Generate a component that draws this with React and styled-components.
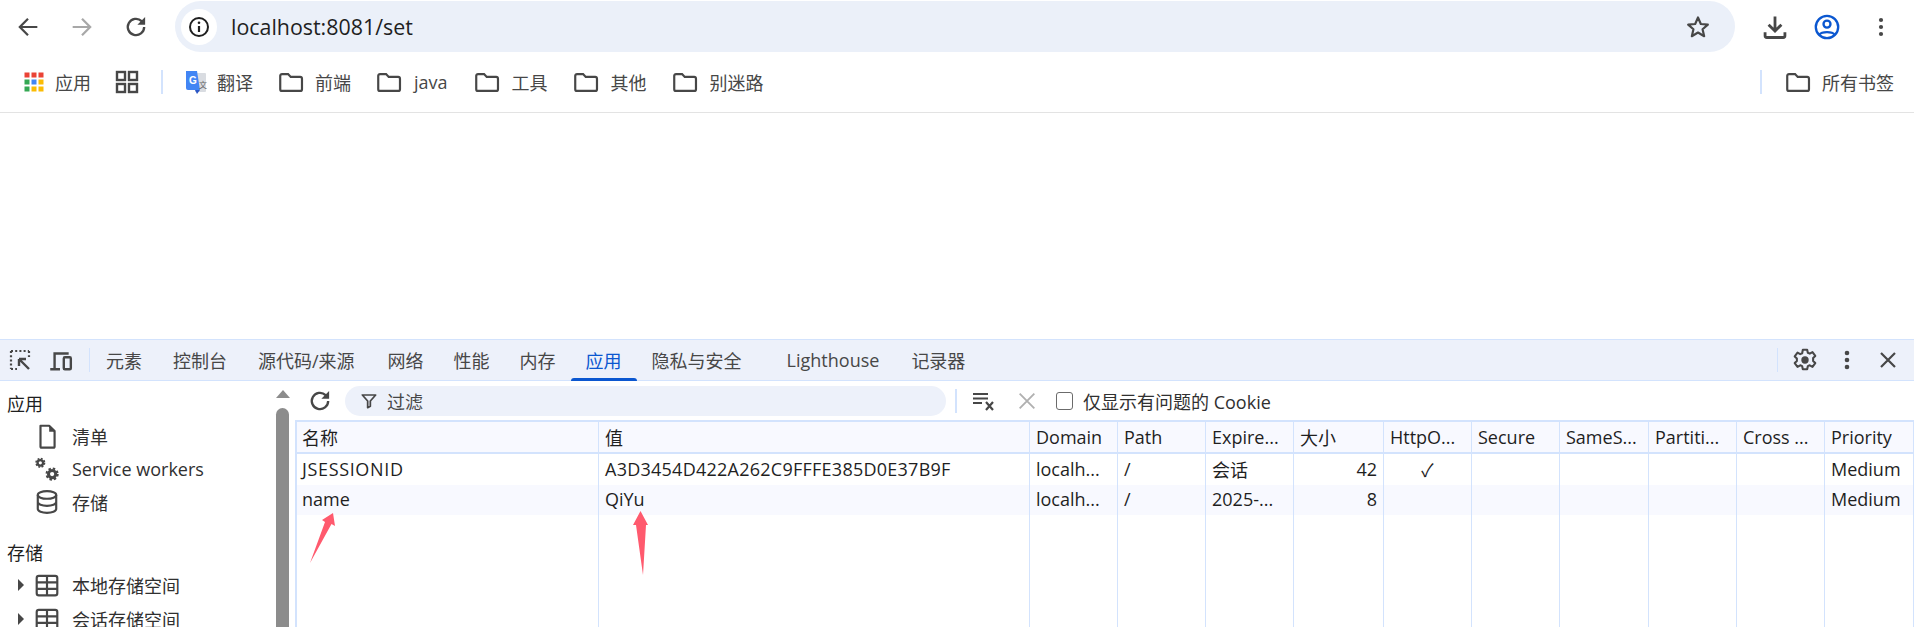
import React from "react";
import styled, { createGlobalStyle } from "styled-components";

const FONT = `"Open Sans", "Noto Sans CJK SC", sans-serif`;

const Global = createGlobalStyle`
  html, body { margin: 0; padding: 0; background: #fff; overflow: hidden; }
  body { font-family: ${FONT}; color: #303030; }
  * { box-sizing: border-box; }
`;

const Page = styled.div`
  width: 1914px; height: 627px; display: flex; flex-direction: column; overflow: hidden;
`;
const NavBar = styled.div`
  height: 54px; display: flex; align-items: center; padding-bottom: 1px;
`;
const NavButton = styled.div`
  width: ${p => p.$w || 54}px; height: 54px; display: flex; align-items: center; justify-content: center; flex: none;
`;
const Omnibox = styled.div`
  width: 1560px; height: 51px; border-radius: 26px; background: #ebf0f9;
  display: flex; align-items: center; padding: 0 24px 0 6px; flex: none;
`;
const InfoChip = styled.div`
  width: 36px; height: 36px; border-radius: 50%; background: #fff; display: flex; align-items: center; justify-content: center; flex: none;
`;
const Url = styled.div`
  margin-left: 14px; font-size: 21.4px; color: #1f1f1f; flex: 1;
`;
const BookmarkBar = styled.div`
  height: 59px; display: flex; align-items: center; border-bottom: 1px solid #e3e3e3; padding: 0 20px 2px 24px;
`;
const Bookmark = styled.div`
  display: flex; align-items: center; gap: ${p => p.$gap || 10}px; font-size: 18px; color: #474747; flex: none; margin-left: ${p => p.$ml || 0}px;
`;
const BarDivider = styled.div`
  width: 2px; height: 24px; background: #d3e3fd; flex: none; margin-left: ${p => p.$ml || 0}px;
`;
const Spacer = styled.div` flex: 1; `;
const Blank = styled.div` height: 226px; flex: none; `;

const DevTools = styled.div`
  flex: 1; display: flex; flex-direction: column; min-height: 0;
`;
const TabBar = styled.div`
  height: 42px; flex: none; background: #edf1fa; border-top: 1px solid #d3e3fd; border-bottom: 1px solid #d3e3fd;
  display: flex; align-items: stretch;
`;
const TabTool = styled.div`
  width: ${p => p.$w}px; display: flex; align-items: center; justify-content: center; flex: none;
`;
const ToolDivider = styled.div`
  width: 1px; height: 24px; background: #d3e3fd; align-self: center; flex: none; margin: ${p => p.$m || "0"};
`;
const Tab = styled.div`
  position: relative; display: flex; align-items: center; padding: 0 15px; font-size: 18px; flex: none;
  margin-left: ${p => p.$ml || 0}px;
  color: ${p => (p.$active ? "#0b57d0" : "#474747")};
  ${p => p.$active && `
    &::after { content: ""; position: absolute; left: 0; right: 0; bottom: -1px; height: 3px; background: #0b57d0; border-radius: 3px 3px 0 0; }
  `}
`;
const Body = styled.div` flex: 1; display: flex; min-height: 0; `;
const Sidebar = styled.div`
  width: 295px; flex: none; position: relative; overflow: hidden; padding-top: 5px;
`;
const SectionHead = styled.div`
  height: 33px; padding-left: 7px; display: flex; align-items: center; font-size: 18px; color: #1f1f1f;
  margin-top: ${p => p.$mt || 0}px;
`;
const TreeRow = styled.div`
  height: ${p => p.$h || 33}px; display: flex; align-items: center; font-size: 18px; color: #303030; padding-left: 18px;
`;
const Caret = styled.div`
  width: 0; height: 0; border-left: 6px solid ${p => (p.$hide ? "transparent" : "#474747")};
  border-top: 6px solid transparent; border-bottom: 6px solid transparent; flex: none; margin-right: 9px;
`;
const TreeIcon = styled.div`
  width: 27px; display: flex; justify-content: center; flex: none; margin-right: 12px;
`;
const ScrollUp = styled.div`
  position: absolute; right: 5px; top: 9px; width: 0; height: 0;
  border-left: 7.5px solid transparent; border-right: 7.5px solid transparent; border-bottom: 8px solid #8c8c8c;
`;
const ScrollThumb = styled.div`
  position: absolute; right: 6px; top: 27px; bottom: -20px; width: 13px; background: #8c8c8c; border-radius: 7px 7px 0 0;
`;
const Main = styled.div` flex: 1; display: flex; flex-direction: column; min-width: 0; position: relative; `;
const FilterBar = styled.div`
  height: 39px; flex: none; display: flex; align-items: center;
`;
const RefreshBox = styled.div`
  width: 50px; display: flex; justify-content: center; flex: none;
`;
const FilterInput = styled.div`
  width: 601px; height: 30px; border-radius: 15px; background: #edf1fa; display: flex; align-items: center; padding-left: 16px; gap: 10px;
  font-size: 18px; color: #474747; flex: none;
`;
const FilterDivider = styled.div`
  width: 2px; height: 24px; background: #d3e3fd; margin-left: 9px; flex: none;
`;
const FilterTool = styled.div`
  width: ${p => p.$w}px; display: flex; justify-content: center; flex: none;
`;
const CheckBox = styled.div`
  width: 17px; height: 18px; border: 1.5px solid #6b6b6b; border-radius: 3px; flex: none; margin-right: 10px; margin-left: 13px;
`;
const CheckLabel = styled.div` font-size: 18px; color: #303030; white-space: nowrap; `;
const Table = styled.div`
  flex: 1; display: grid; min-height: 0; border-top: 2px solid #d3e3fd; border-left: 2px solid #d3e3fd;
  grid-template-columns: 302px 431px 88px 88px 88px 90px 88px 88px 89px 88px 88px 1fr;
  grid-template-rows: 32px 31px 30px 1fr;
`;
const Cell = styled.div`
  border-right: 1px solid #d3e3fd;
  padding: 0 6px 2px; display: flex; align-items: center; font-size: 18px; color: #1f1f1f; white-space: nowrap; overflow: hidden;
  justify-content: ${p => p.$align || "flex-start"};
  background: ${p => (p.$bg ? "#f8f9ff" : "#fff")};
`;
const NameCell = styled(Cell)`
  padding-left: 5px;
`;
const HeadCell = styled(Cell)`
  background: #f8f9ff; border-bottom: 2px solid #d3e3fd; padding-bottom: 0;
`;
const NameHead = styled(HeadCell)`
  padding-left: 5px;
`;
const HashText = styled.span` letter-spacing: 0.25px; `;
const SessionName = styled.span` letter-spacing: 0.65px; `;
const Arrows = styled.svg`
  position: absolute; left: 0; top: 0; pointer-events: none;
`;

const Ico = ({ s = 24, children, vb = "0 0 24 24", ...r }) => (
  <svg width={s} height={s} viewBox={vb} fill="none" {...r}>{children}</svg>
);

const Folder = () => (
  <Ico s={29}><path d="M3.500 6.500a1.500 1.500 0 0 1 1.500-1.500h5l2.200 2.400h7.800a1.500 1.500 0 0 1 1.500 1.500v8.600a1.500 1.500 0 0 1-1.500 1.500H5a1.500 1.500 0 0 1-1.500-1.500z" stroke="#474747" strokeWidth="1.800" /></Ico>
);
const Arrow = ({ dir, color }) => (
  <Ico s={28}>
    <path d={dir < 0 ? "M20 12H5M12 5l-7 7 7 7" : "M4 12h15M12 5l7 7-7 7"} stroke={color} strokeWidth="1.900" />
  </Ico>
);
const Dots = ({ c = "#474747", r = 2.4 }) => (
  <Ico s={24}><circle cx="12" cy="5" r={r} fill={c} /><circle cx="12" cy="12" r={r} fill={c} /><circle cx="12" cy="19" r={r} fill={c} /></Ico>
);
const Reload = ({ s = 24, c = "#474747", w = 2.2 }) => (
  <Ico s={s}><path d="M19 12a7 7 0 1 1-2.200-5.100L19 9" stroke={c} strokeWidth={w} /><path d="M19.800 3.500v6.600h-6.600z" fill={c} /></Ico>
);
const AppsGrid = () => {
  const order = ["#ea4335", "#ea4335", "#ea4335", "#34a853", "#4285f4", "#fbbc04", "#34a853", "#fbbc04", "#fbbc04"];
  return (
    <Ico s={20} vb="0 0 20 20">
      {order.map((c, i) => <rect key={i} x={(i % 3) * 7 + 0.5} y={Math.floor(i / 3) * 7 + 0.5} width="5" height="5" fill={c} />)}
    </Ico>
  );
};
const OutlineGrid = () => (
  <Ico s={24}>
    {[[2, 2], [14, 2], [2, 14], [14, 14]].map(([x, y]) => <rect key={x + "-" + y} x={x} y={y} width="8" height="8" stroke="#474747" strokeWidth="2.400" />)}
  </Ico>
);
const Translate = () => (
  <Ico s={24}>
    <path d="M11 3h10a1 1 0 0 1 1 1v17a1 1 0 0 1-1 1H11z" fill="#d9dce1" />
    <path d="M2 1h11l3 19H4a2 2 0 0 1-2-2z" fill="#4285f4" />
    <path d="M11 20h5l-3 4z" fill="#2a56c6" />
    <text x="5" y="14" fontSize="10" fontWeight="700" fill="#fff" fontFamily="Liberation Sans">G</text>
    <text x="15" y="18" fontSize="8" fill="#666" fontFamily="Noto Sans CJK SC">文</text>
  </Ico>
);
const Table3 = () => (
  <Ico s={26}><rect x="2.500" y="3.500" width="19" height="18" rx="2" stroke="#474747" strokeWidth="2" /><path d="M2.500 9.500h19M2.500 15.500h19M12 3.500v18" stroke="#474747" strokeWidth="2" /></Ico>
);
const Gear = ({ cx, cy, r }) => (
  <g>
    <circle cx={cx} cy={cy} r={r * 0.75} stroke="#474747" strokeWidth={r * 0.62} />
    <circle cx={cx} cy={cy} r={r * 1.15} stroke="#474747" strokeWidth={r * 0.42} strokeDasharray={`${r * 0.5} ${(2 * Math.PI * r * 1.15) / 8 - r * 0.5}`} />
  </g>
);

const tabs = [["元素", 0], ["控制台", 1], ["源代码/来源", 1], ["网络", 3], ["性能", 0], ["内存", 0]];
const heads = ["名称", "值", "Domain", "Path", "Expire...", "大小", "HttpO...", "Secure", "SameS...", "Partiti...", "Cross ...", "Priority"];
const rows = [
  [<SessionName key="n">JSESSIONID</SessionName>, <HashText key="v">A3D3454D422A262C9FFFE385D0E37B9F</HashText>, "localh...", "/", "会话", "42", "✓", "", "", "", "", "Medium"],
  ["name", "QiYu", "localh...", "/", "2025-...", "8", "", "", "", "", "", "Medium"],
];
const alignFor = i => (i === 5 ? "flex-end" : i === 6 ? "center" : "flex-start");

export default function App() {
  return (
    <Page>
      <Global />
      <NavBar>
        <NavButton $w={55}><Arrow dir={-1} color="#474747" /></NavButton>
        <NavButton $w={54}><Arrow dir={1} color="#a8a8a8" /></NavButton>
        <NavButton $w={54}><Reload s={28} w={2} /></NavButton>
        <NavButton $w={12} />
        <Omnibox>
          <InfoChip>
            <Ico s={24}><circle cx="12" cy="12" r="9" stroke="#1f1f1f" strokeWidth="2" /><path d="M12 11v6" stroke="#1f1f1f" strokeWidth="2.200" /><circle cx="12" cy="7.800" r="1.300" fill="#1f1f1f" /></Ico>
          </InfoChip>
          <Url>localhost:8081/set</Url>
          <Ico s={26}><path d="M12 3.200l2.600 6 6.500.6-4.900 4.300 1.500 6.400L12 17.100l-5.700 3.400 1.500-6.400-4.900-4.300 6.500-.6z" stroke="#474747" strokeWidth="2" strokeLinejoin="round" /></Ico>
        </Omnibox>
        <NavButton $w={13} />
        <NavButton $w={54}>
          <Ico s={28}><path d="M12 3v12M6.500 10l5.500 5.500L17.500 10" stroke="#474747" strokeWidth="2.400" /><path d="M3.500 16.500v3a1.500 1.500 0 0 0 1.500 1.500h14a1.500 1.500 0 0 0 1.500-1.500v-3" stroke="#474747" strokeWidth="2.400" /></Ico>
        </NavButton>
        <NavButton $w={50}>
          <Ico s={28}><circle cx="12" cy="12" r="9.600" stroke="#0b57d0" strokeWidth="2" /><circle cx="12" cy="9.500" r="3" stroke="#0b57d0" strokeWidth="2" /><path d="M5.500 18.500c2-2.800 11-2.800 13 0" stroke="#0b57d0" strokeWidth="2" /></Ico>
        </NavButton>
        <NavButton $w={58}><Dots r={2.1} /></NavButton>
      </NavBar>
      <BookmarkBar>
        <Bookmark $gap={11}><AppsGrid />应用</Bookmark>
        <Bookmark $ml={24}><OutlineGrid /></Bookmark>
        <BarDivider $ml={22} />
        <Bookmark $ml={21} $gap={9}><Translate />翻译</Bookmark>
        <Bookmark $ml={23}><Folder />前端</Bookmark>
        <Bookmark $ml={23} $gap={11}><Folder />java</Bookmark>
        <Bookmark $ml={24} $gap={11}><Folder />工具</Bookmark>
        <Bookmark $ml={23} $gap={11}><Folder />其他</Bookmark>
        <Bookmark $ml={23} $gap={11}><Folder />别迷路</Bookmark>
        <Spacer />
        <BarDivider />
        <Bookmark $ml={21}><Folder />所有书签</Bookmark>
      </BookmarkBar>
      <Blank />
      <DevTools>
        <TabBar>
          <TabTool $w={39}>
            <Ico s={24}><path d="M3 3h18M3 3v18M3 21h6M21 3v6" stroke="#474747" strokeWidth="2.200" strokeDasharray="2 2.200" /><path d="M21 21L11 11M11 11v7M11 11h7" stroke="#474747" strokeWidth="2.400" /></Ico>
          </TabTool>
          <TabTool $w={42}>
            <Ico s={26}><path d="M20 6H7v14M3 20.500h9" stroke="#474747" strokeWidth="2.200" /><rect x="15.500" y="9.500" width="6.500" height="11" rx="1" stroke="#474747" strokeWidth="2.200" /></Ico>
          </TabTool>
          <ToolDivider $m="0 1px 0 8px" />
          {tabs.map(([t, ml]) => <Tab key={t} $ml={ml}>{t}</Tab>)}
          <Tab $active>应用</Tab>
          <Tab>隐私与安全</Tab>
          <Tab $ml={15}>Lighthouse</Tab>
          <Tab $ml={2}>记录器</Tab>
          <Spacer />
          <ToolDivider />
          <TabTool $w={54}>
            <Ico s={26}><path d="M10 2.500h4l.6 2.800 1.800.8 2.500-1.400 2.600 3.500-2 1.900v2.800l2 1.900-2.600 3.500-2.500-1.400-1.800.8-.6 2.800h-4l-.6-2.800-1.800-.8-2.500 1.400-2.600-3.500 2-1.900V10.600l-2-1.900 2.600-3.500 2.500 1.400 1.800-.8z" stroke="#474747" strokeWidth="1.900" strokeLinejoin="round" /><circle cx="12" cy="12" r="3.400" fill="#474747" /></Ico>
          </TabTool>
          <TabTool $w={30}><Dots r={2.3} /></TabTool>
          <TabTool $w={52}>
            <Ico s={24}><path d="M5 5l14 14M19 5L5 19" stroke="#474747" strokeWidth="2.200" /></Ico>
          </TabTool>
        </TabBar>
        <Body>
          <Sidebar>
            <SectionHead>应用</SectionHead>
            <TreeRow><Caret $hide /><TreeIcon>
              <Ico s={26}><path d="M6 2.500h8l5 5V22a.8.8 0 0 1-.8.8H6.800A.8.8 0 0 1 6 22z" stroke="#474747" strokeWidth="2" strokeLinejoin="round" /><path d="M14 2.500V8h5z" fill="#474747" /></Ico>
            </TreeIcon>清单</TreeRow>
            <TreeRow><Caret $hide /><TreeIcon>
              <Ico s={30}>
                <Gear cx={6.500} cy={6.500} r={3.300} />
                <Gear cx={17} cy={16.500} r={4.300} />
              </Ico>
            </TreeIcon>Service workers</TreeRow>
            <TreeRow><Caret $hide /><TreeIcon>
              <Ico s={26}><ellipse cx="12" cy="5.500" rx="8.500" ry="3.500" stroke="#474747" strokeWidth="2" /><path d="M3.500 5.500v13c0 2 3.800 3.500 8.500 3.500s8.500-1.500 8.500-3.500v-13M3.500 12c0 2 3.800 3.500 8.500 3.500s8.500-1.500 8.500-3.500" stroke="#474747" strokeWidth="2" /></Ico>
            </TreeIcon>存储</TreeRow>
            <SectionHead $mt={17}>存储</SectionHead>
            <TreeRow $h={34}><Caret /><TreeIcon><Table3 /></TreeIcon>本地存储空间</TreeRow>
            <TreeRow><Caret /><TreeIcon><Table3 /></TreeIcon>会话存储空间</TreeRow>
            <ScrollUp />
            <ScrollThumb />
          </Sidebar>
          <Main>
            <FilterBar>
              <RefreshBox><Reload s={28} c="#474747" w={2} /></RefreshBox>
              <FilterInput>
                <Ico s={16}><path d="M2 3h20l-8 9v8l-4 2V12z" stroke="#474747" strokeWidth="2.600" strokeLinejoin="round" /></Ico>
                过滤
              </FilterInput>
              <FilterDivider />
              <FilterTool $w={53}>
                <Ico s={24}><path d="M1 5h15M1 9.500h15M1 14h9" stroke="#474747" strokeWidth="2" /><path d="M14 13l7 8M21 13l-7 8" stroke="#474747" strokeWidth="2.200" /></Ico>
              </FilterTool>
              <FilterTool $w={33}>
                <Ico s={22}><path d="M4 4l16 16M20 4L4 20" stroke="#b0b0b0" strokeWidth="2" /></Ico>
              </FilterTool>
              <CheckBox />
              <CheckLabel>仅显示有问题的 Cookie</CheckLabel>
            </FilterBar>
            <Table>
              {heads.map((h, i) => (i === 0 ? <NameHead key={h}>{h}</NameHead> : <HeadCell key={h}>{h}</HeadCell>))}
              {rows.map((r, ri) => r.map((c, i) => {
                const C = i === 0 ? NameCell : Cell;
                return <C key={ri + "-" + i} $bg={ri === 1} $align={alignFor(i)}>{c}</C>;
              }))}
              {heads.map(h => <Cell key={"f" + h} />)}
            </Table>
            <Arrows width="400" height="246">
              <path d="M38 132L40 145L36.500 143L15 182L30 141L27 139Z" fill="#ff5a6e" />
              <path d="M345.500 130L353 144L351 144L348 194L341 144L338 144Z" fill="#ff5a6e" />
            </Arrows>
          </Main>
        </Body>
      </DevTools>
    </Page>
  );
}
